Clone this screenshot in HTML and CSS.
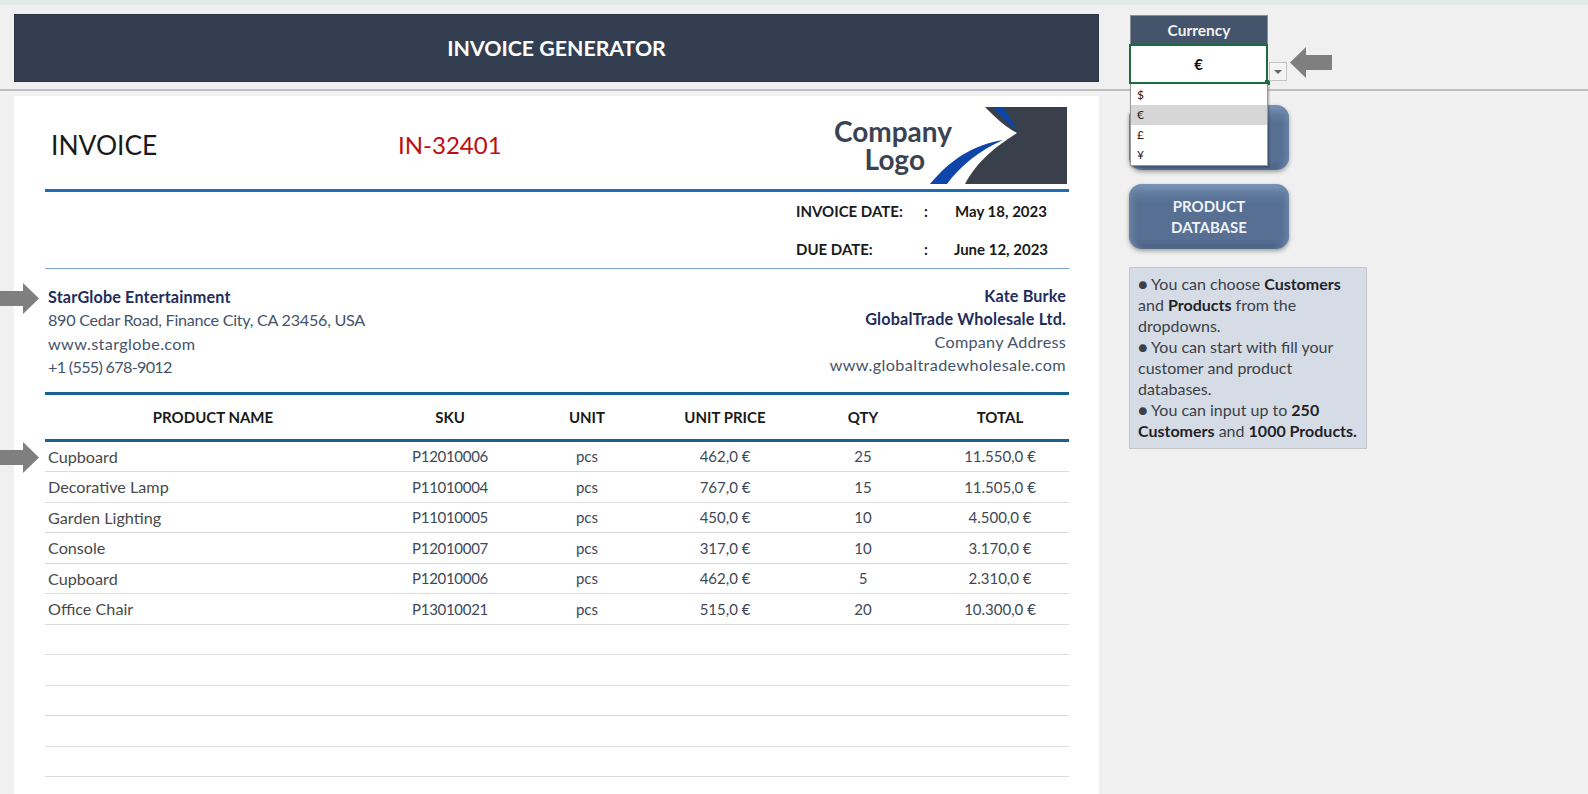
FILE: index.html
```html
<!DOCTYPE html>
<html lang="en">
<head>
<meta charset="utf-8">
<title>Invoice Generator</title>
<link rel="stylesheet" href="styles.css">
</head>
<body>
<div class="strip"></div>
<header class="topbar">
  <div class="title-bar">INVOICE GENERATOR</div>
  <div class="currency">
    <div class="currency-head">Currency</div>
    <div class="currency-cell">€</div>
    <div class="handle"></div>
    <div class="drop-btn"><span class="drop-caret"></span></div>
    <svg class="arrow-left" viewBox="0 0 42 31"><path d="M0 15.5 16 0V8H42V23H16V31Z" fill="#7f7f7f"/></svg>
    <ul class="drop-list">
      <li>$</li>
      <li class="active">€</li>
      <li>£</li>
      <li>¥</li>
    </ul>
  </div>
</header>
<div class="content">
  <main class="sheet">
    <svg class="arrow-right arrow-customer" viewBox="0 0 39 31"><path d="M0 8H23V0L39 15.5 23 31V23H0Z" fill="#7f7f7f"/></svg>
    <svg class="arrow-right arrow-product" viewBox="0 0 39 31"><path d="M0 8H23V0L39 15.5 23 31V23H0Z" fill="#7f7f7f"/></svg>
    <section class="doc-head">
      <h1 class="doc-title">INVOICE</h1>
      <div class="doc-number">IN-32401</div>
      <svg class="logo" viewBox="0 0 234 78">
        <path d="M152 0H234V77H132C147 50 166 38 184 26 172 20 162 10 152 0Z" fill="#3a404b"/>
        <path d="M160 0H170L185 24C175 17 167 9 160 0Z" fill="#0e45a8"/>
        <path d="M97 77C118 52 140 38 170 33 146 44 128 58 114 77Z" fill="#0e45a8"/>
        <text class="logo-text" x="119" y="35" text-anchor="end">Company</text>
        <text class="logo-text" x="92" y="63" text-anchor="end">Logo</text>
      </svg>
    </section>
    <section class="dates">
      <div class="date-row"><span>INVOICE DATE:</span><span>:</span><span class="date-value">May 18, 2023</span></div>
      <div class="date-row"><span>DUE DATE:</span><span>:</span><span class="date-value">June 12, 2023</span></div>
    </section>
    <section class="parties">
      <div class="party party-left">
        <div class="party-name">StarGlobe Entertainment</div>
        <div class="addr">890 Cedar Road, Finance City, CA 23456, USA</div>
        <div class="web">www.starglobe.com</div>
        <div class="phone">+1 (555) 678-9012</div>
      </div>
      <div class="party party-right">
        <div class="party-name">Kate Burke</div>
        <div class="party-name">GlobalTrade Wholesale Ltd.</div>
        <div class="company">Company Address</div>
        <div class="web">www.globaltradewholesale.com</div>
      </div>
    </section>
    <section class="items">
      <div class="row row-head"><div>PRODUCT NAME</div><div>SKU</div><div>UNIT</div><div>UNIT PRICE</div><div>QTY</div><div>TOTAL</div></div>
      <div class="row"><div class="name">Cupboard</div><div class="sku">P12010006</div><div>pcs</div><div>462,0 €</div><div>25</div><div>11.550,0 €</div></div>
      <div class="row"><div class="name">Decorative Lamp</div><div class="sku">P11010004</div><div>pcs</div><div>767,0 €</div><div>15</div><div>11.505,0 €</div></div>
      <div class="row"><div class="name">Garden Lighting</div><div class="sku">P11010005</div><div>pcs</div><div>450,0 €</div><div>10</div><div>4.500,0 €</div></div>
      <div class="row"><div class="name">Console</div><div class="sku">P12010007</div><div>pcs</div><div>317,0 €</div><div>10</div><div>3.170,0 €</div></div>
      <div class="row"><div class="name">Cupboard</div><div class="sku">P12010006</div><div>pcs</div><div>462,0 €</div><div>5</div><div>2.310,0 €</div></div>
      <div class="row"><div class="name">Office Chair</div><div class="sku">P13010021</div><div>pcs</div><div>515,0 €</div><div>20</div><div>10.300,0 €</div></div>
      <div class="row"></div>
      <div class="row"></div>
      <div class="row"></div>
      <div class="row"></div>
      <div class="row"></div>
    </section>
  </main>
  <aside class="side">
    <div class="btn"></div>
    <div class="btn">PRODUCT<br>DATABASE</div>
    <div class="note">
      ● You can choose <b>Customers</b><br>
      and <b>Products</b> from the<br>
      dropdowns.<br>
      ● You can start with fill your<br>
      customer and product<br>
      databases.<br>
      ● You can input up to <b>250</b><br>
      <b>Customers</b> and <b>1000 Products.</b>
    </div>
  </aside>
</div>
</body>
</html>
```
FILE: styles.css
```css
* { box-sizing: border-box; }
html, body { margin: 0; height: 794px; overflow: hidden; }
body {
  background: #f0f0f0;
  font-family: "Lato", "Liberation Sans", sans-serif;
  font-size: 15px;
  color: #44546a;
}
.strip { height: 5px; background: #e3ebe7; }
.topbar {
  display: flex;
  height: 86px;
  padding: 9px 0 0 14px;
  border-bottom: 2px solid #bfbfbf;
}
.title-bar {
  width: 1085px;
  height: 68px;
  padding-bottom: 1px;
  background: #333f50;
  border: 1px solid #2a3442;
  color: #fff;
  font-weight: 700;
  font-size: 21.3px;
  display: flex;
  align-items: center;
  justify-content: center;
}
.currency {
  position: relative;
  margin-left: 30px;
  margin-top: 1px;
  width: 139px;
}
.currency-head {
  height: 29px;
  margin-left: 1px;
  background: #44546a;
  border: 1px solid #8a8f96;
  border-bottom: 0;
  color: #f2f2f2;
  font-weight: 700;
  font-size: 15.5px;
  display: flex;
  align-items: center;
  justify-content: center;
}
.currency-cell {
  height: 40px;
  background: #fff;
  border: 2px solid #1d6b41;
  color: #111;
  font-weight: 700;
  font-size: 15px;
  display: flex;
  align-items: center;
  justify-content: center;
}
.handle {
  position: absolute;
  left: 136px;
  top: 65px;
  width: 5px;
  height: 5px;
  background: #1d6b41;
}
.drop-btn {
  position: absolute;
  left: 140px;
  top: 47px;
  width: 18px;
  height: 19px;
  background: #f4f4f4;
  border: 1px solid #c4c4c4;
  display: flex;
  align-items: center;
  justify-content: center;
}
.drop-caret {
  width: 0;
  height: 0;
  border: 4px solid transparent;
  border-top: 4px solid #666;
  border-bottom: 0;
}
.arrow-left {
  position: absolute;
  left: 161px;
  top: 32px;
  width: 42px;
  height: 31px;
}
.drop-list {
  position: absolute;
  left: 1px;
  top: 69px;
  width: 138px;
  margin: 0;
  padding: 1px 0 0;
  list-style: none;
  background: #fff;
  border: 1px solid #9a9a9a;
  border-top: 0;
  box-shadow: 1px 1px 2px rgba(0, 0, 0, 0.3);
  z-index: 2;
  color: #222;
  font-size: 12px;
}
.drop-list li {
  height: 20px;
  line-height: 20px;
  padding-left: 6px;
}
.drop-list .active { background: #d6d6d6; }
.content { display: flex; }
.sheet {
  position: relative;
  width: 1085px;
  height: 710px;
  margin: 5px 0 0 14px;
  padding: 0 30px 0 31px;
  background: #fff;
}
.arrow-right {
  position: absolute;
  left: -14px;
  width: 39px;
  height: 31px;
}
.arrow-customer { top: 187px; }
.arrow-product { top: 346px; }
.doc-head {
  display: flex;
  align-items: center;
  height: 96px;
  padding-top: 5px;
  padding-left: 6px;
  border-bottom: 3px solid #1f6cb4;
}
.doc-title {
  width: 347px;
  margin: 0;
  font-weight: 400;
  font-size: 26.4px;
  color: #1a1a1a;
}
.doc-number {
  flex: 1;
  padding-bottom: 2px;
  font-size: 24px;
  color: #c00d0d;
}
.logo {
  width: 234px;
  height: 78px;
  margin-top: 1px;
  margin-right: 2px;
}
.logo-text {
  font-family: "Lato", "Liberation Sans", sans-serif;
  font-weight: 700;
  font-size: 28px;
  fill: #3b4350;
}
.dates {
  height: 77px;
  padding-left: 751px;
  border-bottom: 1px solid #7f9fcf;
  color: #1a1a1a;
  font-weight: 700;
  font-size: 15px;
}
.date-row {
  display: grid;
  grid-template-columns: 128px 20px 114px;
  align-items: center;
  height: 38.2px;
}
.date-value { text-align: center; }
.parties {
  display: flex;
  justify-content: space-between;
  height: 122.5px;
  padding: 0 3px;
  font-size: 16.2px;
  line-height: 23.3px;
}
.party-left { padding-top: 16px; }
.party-right { padding-top: 14.5px; text-align: right; }
.party-name { color: #1f2d5c; font-weight: 700; letter-spacing: 0.15px; }
.addr { letter-spacing: -0.28px; }
.web { letter-spacing: 0.38px; }
.phone { letter-spacing: -0.7px; }
.company { letter-spacing: 0.25px; }
.items { border-top: 3px solid #156293; }
.row {
  display: grid;
  grid-template-columns: 336px 138px 136px 140px 136px 138px;
  align-items: center;
  height: 30.5px;
  border-bottom: 1px solid #dcdcdc;
  text-align: center;
  color: #404858;
}
.row .name { text-align: left; padding-left: 3px; color: #4a4a4a; font-size: 16.2px; }
.row .sku { letter-spacing: -0.3px; }
.row-head {
  height: 47px;
  border-bottom: 3px solid #156293;
  color: #1a1a1a;
  font-weight: 700;
  font-size: 15px;
}
.side { margin-left: 30px; }
.btn {
  display: flex;
  align-items: center;
  justify-content: center;
  width: 160px;
  height: 65px;
  margin-top: 14px;
  margin-bottom: 4px;
  border-radius: 13px;
  background: linear-gradient(180deg, #7f99bc 0, #627c9f 9px, #566f93 18px, #566f93 86%, #4a5f80 100%);
  box-shadow: inset 6px 0 6px -3px #6d88ab, inset -6px 0 6px -3px #6d88ab, 0 2px 4px rgba(0, 0, 0, 0.35);
  color: #f0f2f5;
  font-weight: 700;
  font-size: 15px;
  line-height: 21px;
  text-align: center;
}
.note {
  width: 238px;
  height: 182px;
  margin-top: 18px;
  padding: 5px 8px;
  background: #d6dce5;
  border: 1px solid #c6c6c6;
  color: #3a3f48;
  font-size: 16px;
  line-height: 21px;
  white-space: nowrap;
}
.note b { color: #1f2329; }
```
